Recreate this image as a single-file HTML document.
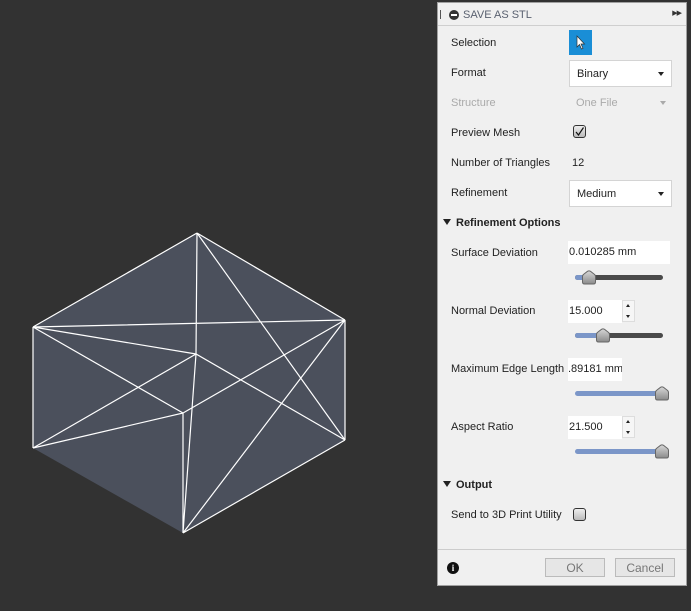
<!DOCTYPE html>
<html><head><meta charset="utf-8"><style>
*{margin:0;padding:0;box-sizing:border-box}
body{width:691px;height:611px;background:#323232;position:relative;overflow:hidden;font-family:"Liberation Sans",sans-serif;font-size:11px;color:#222}
.a{position:absolute}
#p{left:437px;top:2px;width:250px;height:584px;background:#f0f0f0;border:1px solid #a0a0a0}
.lb{position:absolute;left:13px;font-size:11px;color:#222;white-space:nowrap}
.dd{position:absolute;left:131px;width:103px;height:27px;background:#fff;border:1px solid #d4d4d4;padding:7px 0 0 7px}
.dd:after{content:"";position:absolute;right:7px;top:11px;border-left:3.5px solid transparent;border-right:3.5px solid transparent;border-top:4px solid #222}
.in{position:absolute;background:#fff;height:23px;padding:5px 0 0 1px;font-size:11px;white-space:nowrap;overflow:hidden}
.sp{position:absolute;width:13px;height:22px;background:#f6f6f6;border:1px solid #ddd}
.sp:before{content:"";position:absolute;left:3px;top:3px;border-left:2.5px solid transparent;border-right:2.5px solid transparent;border-bottom:3px solid #222}
.sp:after{content:"";position:absolute;left:3px;bottom:3px;border-left:2.5px solid transparent;border-right:2.5px solid transparent;border-top:3px solid #222}
.tr{position:absolute;left:137px;width:88px;height:5px;border-radius:3px;background:#4a4a4a;overflow:hidden}
.tr i{display:block;height:5px;background:#7b96c8}
.th{position:absolute;width:16px;height:15px}
.hd{position:absolute;left:5px;font-weight:bold;font-size:11px;color:#222}
.hd:before{content:"";display:inline-block;border-left:4px solid transparent;border-right:4px solid transparent;border-top:6px solid #222;margin-right:5px;vertical-align:1px}
.cb{position:absolute;width:13px;height:13px;border:1px solid #333;border-radius:3px;background:linear-gradient(#eee,#bbb)}
.bt{position:absolute;top:555px;width:60px;height:19px;border:1px solid #bbb;background:#e6e6e6;color:#777;font-size:12px;text-align:center;padding-top:2px}
</style></head><body>
<svg class="a" style="left:0;top:0" width="430" height="611">
<polygon points="197,233 345,320 345,440 183,533 33,448 33,327" fill="#4b505c"/>
<g stroke="#fff" stroke-width="1.2" fill="none">
<path d="M197,233L33,327M197,233L345,320M33,327L345,320M197,233L196,354L183,533M197,233L345,440M33,327L196,354L345,440M33,327L183,413M33,327L33,448M345,320L345,440M33,448L183,413L183,533M33,448L196,354M183,413L345,320M183,533L345,320M183,533L345,440"/>
</g></svg>
<svg width="0" height="0" style="position:absolute"><defs><linearGradient id="g" x1="0" y1="0" x2="0" y2="1"><stop offset="0" stop-color="#d8d8d8"/><stop offset="1" stop-color="#8a8a8a"/></linearGradient></defs></svg>
<div id="p" class="a">
<div class="a" style="left:0;top:0;width:248px;height:23px;border-bottom:1px solid #cfcfcf"></div>
<div class="a" style="left:2px;top:7px;width:1px;height:9px;background:#555"></div>
<div class="a" style="left:11px;top:7px;width:10px;height:10px;border-radius:50%;background:#333"><div style="position:absolute;left:2px;top:4px;width:6px;height:2px;background:#fff"></div></div>
<div class="a" style="left:25px;top:6px;color:#5a6170;font-size:11px">SAVE AS STL</div>
<div class="a" style="right:5px;top:6px;font-size:7px;color:#333;letter-spacing:-1px">▶▶</div>
<div class="lb" style="top:34px">Selection</div>
<div class="a" style="left:131px;top:27px;width:23px;height:25px;background:#1a8ed6"><svg width="23" height="25"><path d="M8,6L8,17L10.5,14.5L12.5,19L14,18.3L12,14L15.5,14Z" fill="#fff" stroke="#333" stroke-width=".7"/></svg></div>
<div class="lb" style="top:64px">Format</div>
<div class="dd" style="top:57px">Binary</div>
<div class="lb" style="top:94px;color:#aaa">Structure</div>
<div class="a" style="left:138px;top:94px;color:#aaa">One File</div>
<div class="a" style="left:222px;top:98px;border-left:3.5px solid transparent;border-right:3.5px solid transparent;border-top:4px solid #aaa"></div>
<div class="lb" style="top:124px">Preview Mesh</div>
<div class="cb" style="left:135px;top:122px"><svg width="13" height="13" style="position:absolute;left:-1px;top:-1px"><path d="M3,7L5.5,10L10.5,2.5" stroke="#111" stroke-width="1.2" fill="none"/></svg></div>
<div class="lb" style="top:154px">Number of Triangles</div>
<div class="a" style="left:134px;top:154px">12</div>
<div class="lb" style="top:184px">Refinement</div>
<div class="dd" style="top:177px">Medium</div>
<div class="hd" style="top:214px">Refinement Options</div>
<div class="lb" style="top:244px">Surface Deviation</div>
<div class="in" style="left:130px;top:238px;width:102px">0.010285 mm</div>
<div class="tr" style="top:272px"><i style="width:14px"></i></div>
<svg class="th" style="left:143px;top:267px"><path d="M1.5,6.5Q1.5,5 3,4L6.5,1.3Q8,0.5 9.5,1.3L13,4Q14.5,5 14.5,6.5L14.5,12Q14.5,14 12.5,14L3.5,14Q1.5,14 1.5,12Z" fill="url(#g)" stroke="#666" stroke-width="1"/></svg>
<div class="lb" style="top:302px">Normal Deviation</div>
<div class="in" style="left:130px;top:297px;width:54px">15.000</div>
<div class="sp" style="left:184px;top:297px"></div>
<div class="tr" style="top:330px"><i style="width:28px"></i></div>
<svg class="th" style="left:157px;top:325px"><path d="M1.5,6.5Q1.5,5 3,4L6.5,1.3Q8,0.5 9.5,1.3L13,4Q14.5,5 14.5,6.5L14.5,12Q14.5,14 12.5,14L3.5,14Q1.5,14 1.5,12Z" fill="url(#g)" stroke="#666" stroke-width="1"/></svg>
<div class="lb" style="top:360px">Maximum Edge Length</div>
<div class="in" style="left:130px;top:355px;width:54px;padding-left:0">.89181 mm</div>
<div class="tr" style="top:388px"><i style="width:88px"></i></div>
<svg class="th" style="left:216px;top:383px"><path d="M1.5,6.5Q1.5,5 3,4L6.5,1.3Q8,0.5 9.5,1.3L13,4Q14.5,5 14.5,6.5L14.5,12Q14.5,14 12.5,14L3.5,14Q1.5,14 1.5,12Z" fill="url(#g)" stroke="#666" stroke-width="1"/></svg>
<div class="lb" style="top:418px">Aspect Ratio</div>
<div class="in" style="left:130px;top:413px;width:54px">21.500</div>
<div class="sp" style="left:184px;top:413px"></div>
<div class="tr" style="top:446px"><i style="width:88px"></i></div>
<svg class="th" style="left:216px;top:441px"><path d="M1.5,6.5Q1.5,5 3,4L6.5,1.3Q8,0.5 9.5,1.3L13,4Q14.5,5 14.5,6.5L14.5,12Q14.5,14 12.5,14L3.5,14Q1.5,14 1.5,12Z" fill="url(#g)" stroke="#666" stroke-width="1"/></svg>
<div class="hd" style="top:476px">Output</div>
<div class="lb" style="top:506px">Send to 3D Print Utility</div>
<div class="cb" style="left:135px;top:505px"></div>
<div class="a" style="left:0;top:546px;width:248px;height:1px;background:#ccc"></div>
<div class="a" style="left:9px;top:559px;width:12px;height:12px;border-radius:50%;background:#111;color:#fff;font-weight:bold;font-size:9px;text-align:center;line-height:12px;font-family:'Liberation Serif',serif">i</div>
<div class="bt" style="left:107px">OK</div>
<div class="bt" style="left:177px">Cancel</div>
</div>
</body></html>
